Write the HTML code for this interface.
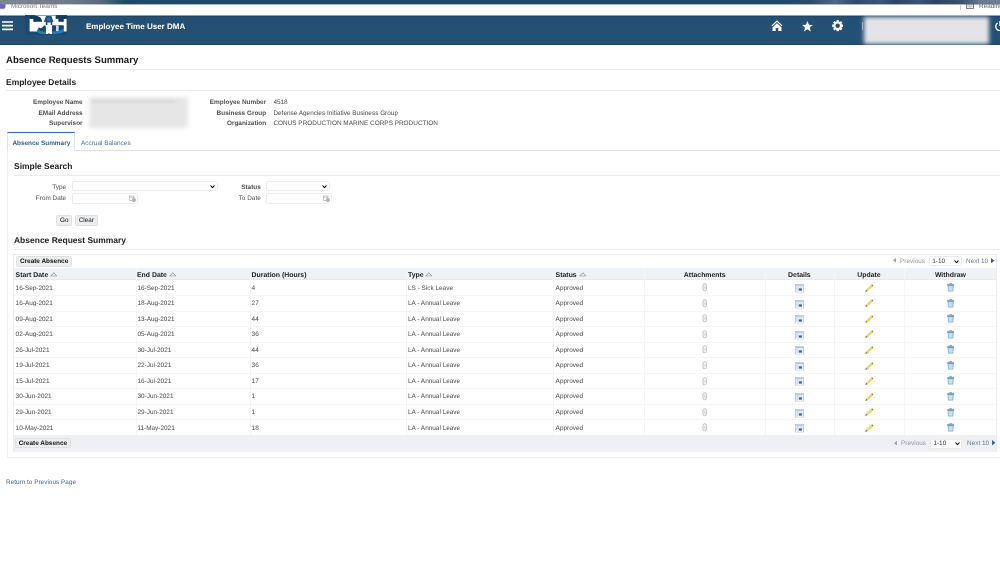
<!DOCTYPE html>
<html lang="en"><head><meta charset="utf-8"><title>Absence Requests Summary</title>
<style>
*{box-sizing:border-box;margin:0;padding:0}
html,body{width:1000px;height:562px;overflow:hidden;background:#fff}
body{position:relative;-webkit-font-smoothing:antialiased;text-rendering:geometricPrecision;font-family:"Liberation Sans",Arial,sans-serif;font-size:6.43px;color:#555}
.a{position:absolute;white-space:nowrap;line-height:1}
.b{font-weight:bold}
.r{text-align:right}
.hl{position:absolute;height:1px;background:#ebebeb}
.vl{position:absolute;width:1px;background:#e7e7e7}
#chrome-top{position:absolute;left:0;top:-4px;width:1000px;height:8px;background:linear-gradient(90deg,#7d8793 0,#6e7a89 7%,#586b7d 10%,#1d4a6a 12.5%,#1b4a6b 78%,#2a4a6e 81%,#4f6587 83.5%,#2e4a6e 85.5%,#3b5578 88%,#2b4568 89.5%,#3a5376 92%,#2a4466 93.5%,#3a4f70 96%,#66778f 98%,#6f7f95 100%)}
#hdr{position:absolute;left:-6px;top:15px;width:1012px;height:30px;background:#245073;border-top:1px solid #8fa3b6;border-bottom:1px solid #1e4465;box-shadow:inset 0 1px 0 #1e4465}
#hdr .ttl{left:86px;top:21.5px;font-size:8.03px;color:#fff;font-weight:bold}
.blur{position:absolute;background:#e6e6e6;filter:blur(2.2px)}
h1,h2{font-weight:bold;color:#222}
.lab{color:#505050;font-weight:bold;text-align:right}
.val{color:#4c4c4c}
.sel,.inp{position:absolute;background:#fff;border:1px solid #ececec;border-radius:1.5px}
.btn{position:absolute;background:#ebedef;border:1px solid #e0e0e0;border-radius:1.5px;color:#141414;text-align:center;line-height:1;white-space:nowrap}
.chev{position:absolute;width:5px;height:3.4px}
.row{position:absolute;left:14px;width:982.4px;height:15.5px;border-bottom:1px solid #f6f6f6}
.row .c{position:absolute;top:5.1px;line-height:1;white-space:nowrap;color:#4c4c4c;font-size:6.43px}
.c1{left:1.6px}.c2{left:123.4px}.c3{left:237.6px}.c4{left:394px}.c5{left:541.6px}
.ic{position:absolute;overflow:visible}
.clip{left:688px;top:2.8px;width:5.4px;height:8.6px}
.det{left:781.2px;top:3.7px;width:9px;height:8.6px}
.pen{left:851.4px;top:3.3px;width:8.8px;height:8px}
.bin{left:932.7px;top:2.7px;width:7.4px;height:8.8px}
.th{font-weight:bold;color:#222;font-size:6.92px}
.pg{color:#979797;font-size:6.43px}
.pgn{color:#6b7a90;font-size:6.43px}

#pg{position:absolute;left:0;top:0;width:1000px;height:562px;will-change:transform;filter:blur(0.35px)}

</style></head>
<body>
<div id="pg">
<svg width="0" height="0" style="position:absolute">
<defs>
<symbol id="i-clip" viewBox="0 0 5.4 8.6"><path d="M1 2.6 V6.2 A1.7 1.7 0 0 0 4.4 6.2 V2.4 A1.7 1.7 0 0 0 1 2.4 Z" fill="#fafafa" stroke="#b4b4b4" stroke-width="0.85"/><path d="M2.7 2.8 V5.9" stroke="#c9c9c9" stroke-width="0.8"/></symbol>
<symbol id="i-det" viewBox="0 0 9 8.6"><rect x="0.3" y="0.3" width="8.4" height="8" fill="#f2f6fc" stroke="#9fb3d9" stroke-width="0.6"/><rect x="0.6" y="0.6" width="7.8" height="1.7" fill="#b9caeb"/><path d="M0.6 4.3 H8.4 M0.6 6.3 H8.4 M3.2 2.3 V8 M6 2.3 V8" stroke="#c3d1ec" stroke-width="0.5"/><rect x="3.9" y="4.4" width="3" height="2.2" fill="#3f62aa"/><rect x="0.9" y="2.8" width="2" height="1.1" fill="#cfdbf2"/><rect x="0.9" y="4.8" width="2" height="1.1" fill="#cfdbf2"/></symbol>
<symbol id="i-pen" viewBox="0 0 8.8 8"><path d="M0.5 7.6 L1.2 5.9 L6.3 1.1 L7.6 2.4 L2.4 7.1 Z" fill="#f6e163" stroke="#cfae2a" stroke-width="0.45"/><path d="M6.3 1.1 L7.1 0.3 L8.5 1.6 L7.6 2.4 Z" fill="#d9663a"/><path d="M0.4 7.7 L1.1 6 L2.3 7.1 Z" fill="#6b5a2e"/></symbol>
<symbol id="i-bin" viewBox="0 0 7.4 8.8"><path d="M1 2.5 H6.4 L5.9 8.3 H1.5 Z" fill="#b3d3ea" stroke="#6b9cc6" stroke-width="0.6"/><rect x="0.3" y="1.2" width="6.8" height="1.3" rx="0.5" fill="#7ea7cb" stroke="#4f7ea8" stroke-width="0.4"/><rect x="2.6" y="0.3" width="2.2" height="0.9" fill="#5f8bb4"/><path d="M2.6 3.6 V7.4 M3.7 3.6 V7.4 M4.8 3.6 V7.4" stroke="#e4f0f9" stroke-width="0.5"/></symbol>
<symbol id="i-chev" viewBox="0 0 5 3.4"><path d="M0.5 0.5 L2.5 2.7 L4.5 0.5" fill="none" stroke="#111" stroke-width="1.1"/></symbol>
<symbol id="i-cal" viewBox="0 0 7 7"><rect x="0.4" y="1" width="4.6" height="4.6" fill="#fff" stroke="#a9a9a9" stroke-width="0.6"/><path d="M0.4 2.3 H5" stroke="#a9a9a9" stroke-width="0.6"/><circle cx="4.9" cy="5" r="1.7" fill="#b9b9b9" stroke="#8f8f8f" stroke-width="0.5"/></symbol>
<symbol id="i-sort" viewBox="0 0 8 5"><path d="M0.6 4.5 L4 0.8 L7.4 4.5 Z" fill="none" stroke="#808080" stroke-width="0.8"/></symbol>
</defs>
</svg>
<!-- browser chrome remnants -->
<svg class="a" style="left:0;top:4px;width:6.6px;height:5.5px" viewBox="0 0 6 5"><path d="M0 0 H5 V2.6 A1.8 1.8 0 0 1 3.2 4.4 H0 Z" fill="#6a63c4"/></svg>
<div class="a" id="teams" style="left:11px;top:4px;font-size:6.4px;color:#7a7a7a">Microsoft Teams</div>
<div class="vl" style="left:960px;top:5px;height:5px;background:#d0d0d0"></div>
<svg class="a" style="left:966px;top:1.8px;width:8px;height:7px" viewBox="0 0 8 7"><rect x="0.5" y="0.5" width="7" height="6" fill="#ededed" stroke="#777" stroke-width="0.9"/><path d="M4 0.5 V6.5 M1.6 2.5 H3 M1.6 4.2 H3 M5 2.5 H6.4 M5 4.2 H6.4" stroke="#8a8a8a" stroke-width="0.6"/></svg>
<div class="a" style="left:979px;top:4.3px;font-size:6.43px;color:#666">Reading list</div>
<div id="chrome-top"></div>
<div class="a" style="left:0;top:4px;width:1000px;height:1px;background:linear-gradient(90deg,#7d8793 0,#6e7a89 7%,#1d4a6a 12.5%,#1b4a6b 78%,#2a4468 90%,#223c5e 100%);opacity:.38"></div>

<!-- application header -->
<div id="hdr"></div>
<svg class="a" style="left:1.6px;top:21px;width:11.6px;height:9.6px" viewBox="0 0 11.6 9.6"><path d="M0 1 H11.6 M0 4.7 H11.6 M0 8.4 H11.6" stroke="#fff" stroke-width="1.7"/></svg>
<svg class="a" id="logo" style="left:25.4px;top:15.4px;width:42px;height:19.9px" viewBox="25.4 15.4 42 19.9">
<rect x="25.4" y="15.4" width="42" height="19.9" fill="#1b4a70"/>
<rect x="30" y="16.4" width="8" height="4" fill="#113b60"/>
<path d="M30 19.1 H33.9 V22 H36 V16 H56.2 V19.1 H59 V22 H64 V19.1 H67 V31.9 H64 V26 H52.5 V34.4 H50.2 L49.3 33.3 L48.4 34.4 H46.1 V26 H44.4 C42.6 28.6 39.6 29.4 38.2 30 L37.3 31.9 H30 Z" fill="#fff"/>
<path d="M30 16.4 H36.4 C40.2 16.4 42.3 18.8 42.5 22.2 H33.9 V19.1 H30 Z" fill="#113b60"/>
<rect x="56.2" y="16.4" width="11" height="2.7" fill="#113b60"/>
<rect x="59" y="19" width="5" height="3.1" fill="#113b60"/>
<path d="M46.4 16.4 H51.8 L53.9 22.4 H52.7 V25.4 H51.1 V23 H47.9 V25.4 H46.2 V22.4 H44.2 Z" fill="#1a5585"/>
<path d="M48 18 H50.4 L51 21 H47.4 Z" fill="#2f7fb5" opacity=".7"/>
<path d="M38.4 29.4 C40.8 31.4 43.4 32 46.1 31.8 V34.4 C42.6 35 39.4 34.4 37.4 32 Z" fill="#257fb5"/>
<path d="M38.4 29.6 C41 31.6 43.6 32 46.1 31.9 V27.6 C44 29 41 29.4 39.2 27.6 Z" fill="#16466f"/>
<path d="M52.5 31.6 C56 31.8 59.6 30.8 64 28.8 V32.4 C60.4 34.4 56 34.6 52.5 34.2 Z" fill="#257fb5"/>
<path d="M52.5 26 H64 V29 C60 31 56 31.9 52.5 31.7 Z" fill="#16466f"/>
<rect x="56.4" y="25.8" width="2.7" height="5.6" fill="#c4ddec"/>
</svg>
<div class="a ttl" style="left:86px;top:23.4px;font-size:8.03px;color:#fff;font-weight:bold">Employee Time User DMA</div>
<svg class="a" style="left:771.4px;top:20.2px;width:12px;height:11.2px" viewBox="0 0 12 11.2"><path d="M6 0.3 L11.5 5.4 L10.6 6.3 L6 2.1 L1.4 6.3 L0.5 5.4 Z" fill="#fff"/><path d="M6 3.2 L10.5 7.2 V11 H7.3 V7.9 H4.7 V11 H1.5 V7.2 Z" fill="#fff"/></svg>
<svg class="a" style="left:801.8px;top:21px;width:10.8px;height:10.6px" viewBox="0 0 10.8 10.6"><path d="M5.4 0 L6.9 3.7 L10.8 4 L7.8 6.5 L8.8 10.4 L5.4 8.3 L2 10.4 L3 6.5 L0 4 L3.9 3.7 Z" fill="#fff"/></svg>
<svg class="a" style="left:831.6px;top:20.2px;width:11.4px;height:11.4px" viewBox="-5.7 -5.7 11.4 11.4"><g fill="#fff"><circle r="4.3"/><g id="gt"><rect x="-1.2" y="-5.5" width="2.4" height="2.4"/></g><use href="#gt" transform="rotate(45)"/><use href="#gt" transform="rotate(90)"/><use href="#gt" transform="rotate(135)"/><use href="#gt" transform="rotate(180)"/><use href="#gt" transform="rotate(225)"/><use href="#gt" transform="rotate(270)"/><use href="#gt" transform="rotate(315)"/></g><circle r="2.25" fill="#245073"/></svg>
<div class="vl" style="left:862px;top:22px;height:8px;background:#c9d2dc;width:0.8px;opacity:.6"></div>
<div class="blur" style="left:864px;top:17.2px;width:125.4px;height:26.8px;filter:blur(2.2px);background:#e4e4e6"></div>
<svg class="a" style="left:995px;top:21px;width:10px;height:10.4px" viewBox="0 0 10 10.4"><path d="M2.6 2 A4.2 4.2 0 1 0 7.4 2" fill="none" stroke="#fff" stroke-width="1.4"/><path d="M5 0 V5" stroke="#fff" stroke-width="1.4"/></svg>

<!-- page title -->
<h1 class="a" style="left:6px;top:55.6px;font-size:9.61px;color:#161616">Absence Requests Summary</h1>
<div class="hl" style="left:5.6px;top:69px;width:994.4px"></div>
<h2 class="a" style="left:6px;top:78.4px;font-size:8.48px">Employee Details</h2>
<div class="hl" style="left:5.6px;top:90px;width:994.4px"></div>

<!-- employee details -->
<div class="a lab" style="left:0;width:82.6px;top:100.3px">Employee Name</div>
<div class="a lab" style="left:0;width:82.6px;top:110.8px">EMail Address</div>
<div class="a lab" style="left:0;width:82.6px;top:121px">Supervisor</div>
<div class="blur" style="left:89px;top:96.6px;width:98.6px;height:31.6px"></div>
<div class="blur" style="left:92px;top:100px;width:84px;height:3.4px;background:#d6d6d6;filter:blur(1.3px);opacity:.7"></div>
<div class="a lab" style="left:180px;width:86.2px;top:100.3px">Employee Number</div>
<div class="a lab" style="left:180px;width:86.2px;top:110.8px">Business Group</div>
<div class="a lab" style="left:180px;width:86.2px;top:121px">Organization</div>
<div class="a val" style="left:273.4px;top:100.3px">4518</div>
<div class="a val" style="left:273.4px;top:110.8px">Defense Agencies Initiative Business Group</div>
<div class="a val" style="left:273.4px;top:121px">CONUS PRODUCTION MARINE CORPS PRODUCTION</div>

<!-- tabs -->
<div class="hl" style="left:7.6px;top:150px;width:992.4px;background:#dedede"></div>
<div class="vl" style="left:7.4px;top:133px;height:324.6px;background:#f0f0f0"></div>
<div class="a" id="tab1" style="left:7.4px;top:132px;width:67.8px;height:19px;background:#fff;border:1px solid #e2e2e2;border-bottom:none;border-top:1.5px solid #2a6db5"></div>
<div class="a b" style="left:12.4px;top:140.9px;color:#2f5f95;font-size:6.43px">Absence Summary</div>
<div class="a" style="left:81px;top:140.8px;color:#4f6f90;font-size:6.43px">Accrual Balances</div>

<!-- simple search -->
<h2 class="a" style="left:14px;top:162.3px;font-size:8.48px">Simple Search</h2>
<div class="hl" style="left:13.6px;top:174.9px;width:986.4px"></div>
<div class="a lab" style="left:0;width:66.2px;top:184.5px;font-weight:normal">Type</div>
<div class="sel" style="left:72.2px;top:181px;width:145.6px;height:10px"></div>
<svg class="chev" style="left:209.6px;top:185px"><use href="#i-chev"/></svg>
<div class="a lab" style="left:200px;width:60.8px;top:184.5px">Status</div>
<div class="sel" style="left:266px;top:181px;width:63.6px;height:10px"></div>
<svg class="chev" style="left:321.6px;top:185px"><use href="#i-chev"/></svg>
<div class="a lab" style="left:0;width:66.2px;top:195.8px;font-weight:normal">From Date</div>
<div class="inp" style="left:72.2px;top:193.4px;width:65.8px;height:10.6px"></div>
<svg class="a" style="left:128.6px;top:195px;width:7px;height:7px"><use href="#i-cal"/></svg>
<div class="a lab" style="left:200px;width:60.8px;top:195.8px;font-weight:normal">To Date</div>
<div class="inp" style="left:266px;top:193.4px;width:66.4px;height:10.6px"></div>
<svg class="a" style="left:322.6px;top:195px;width:7px;height:7px"><use href="#i-cal"/></svg>
<div class="btn" style="left:56px;top:215.3px;width:16.4px;height:10.4px;padding-top:1.6px;font-size:6.43px">Go</div>
<div class="btn" style="left:74.6px;top:215.3px;width:23.6px;height:10.4px;padding-top:1.6px;font-size:6.43px">Clear</div>

<!-- absence request summary -->
<h2 class="a" style="left:14px;top:236.2px;font-size:8.48px">Absence Request Summary</h2>
<div class="hl" style="left:13.6px;top:248.7px;width:986.4px"></div>

<!-- table frame -->
<div class="a" id="tbl" style="left:13px;top:254px;width:983.8px;height:198px;border:1px solid #ededed;border-bottom:none"></div>
<div class="btn b" style="left:16.4px;top:256.3px;width:55.4px;height:10.4px;padding-top:1.9px;font-size:6.43px">Create Absence</div>
<svg class="a" style="left:893.2px;top:258.4px;width:3px;height:4.6px" viewBox="0 0 3.2 5.2"><path d="M3.2 0 L0 2.6 L3.2 5.2 Z" fill="#9a9a9a"/></svg>
<div class="a pg" style="left:900px;top:258.8px">Previous</div>
<div class="sel" style="left:929px;top:256.3px;width:32.6px;height:10px"></div>
<div class="a" style="left:932.2px;top:258.8px;color:#444;font-size:6.43px">1-10</div>
<svg class="chev" style="left:954px;top:260px"><use href="#i-chev"/></svg>
<div class="a pgn" style="left:966px;top:258.8px">Next 10</div>
<svg class="a" style="left:991.2px;top:257.9px;width:3.4px;height:5.4px" viewBox="0 0 3.4 5.6"><path d="M0 0 L3.4 2.8 L0 5.6 Z" fill="#2b5fa8"/></svg>

<!-- column headers -->
<div class="a" id="thead" style="left:14px;top:268.2px;width:982.4px;height:11.6px;background:#eef1f6;border-bottom:1px solid #e6e9f0"></div>
<div class="a th" style="left:15.6px;top:272.7px">Start Date</div>
<svg class="a" style="left:49.8px;top:272.4px;width:7.6px;height:4.6px"><use href="#i-sort"/></svg>
<div class="a th" style="left:137px;top:272.7px">End Date</div>
<svg class="a" style="left:169px;top:272.4px;width:7.6px;height:4.6px"><use href="#i-sort"/></svg>
<div class="a th" style="left:251.6px;top:272.7px">Duration (Hours)</div>
<div class="a th" style="left:408px;top:272.7px">Type</div>
<svg class="a" style="left:425.4px;top:272.4px;width:7.6px;height:4.6px"><use href="#i-sort"/></svg>
<div class="a th" style="left:555.6px;top:272.7px">Status</div>
<svg class="a" style="left:578.6px;top:272.4px;width:7.6px;height:4.6px"><use href="#i-sort"/></svg>
<div class="a th" style="left:644.4px;width:120.8px;text-align:center;top:272.7px">Attachments</div>
<div class="a th" style="left:765.2px;width:68.4px;text-align:center;top:272.7px">Details</div>
<div class="a th" style="left:833.6px;width:70.8px;text-align:center;top:272.7px">Update</div>
<div class="a th" style="left:904.4px;width:92px;text-align:center;top:272.7px">Withdraw</div>
<!-- column dividers -->
<div class="vl" style="left:135.6px;top:268.2px;height:167px;background:#f5f5f5"></div>
<div class="vl" style="left:249.8px;top:268.2px;height:167px;background:#f5f5f5"></div>
<div class="vl" style="left:405.8px;top:268.2px;height:167px;background:#f5f5f5"></div>
<div class="vl" style="left:553.4px;top:268.2px;height:167px;background:#f5f5f5"></div>
<div class="vl" style="left:644.4px;top:268.2px;height:167px;background:#f5f5f5"></div>
<div class="vl" style="left:765.2px;top:268.2px;height:167px;background:#f5f5f5"></div>
<div class="vl" style="left:833.6px;top:268.2px;height:167px;background:#f5f5f5"></div>
<div class="vl" style="left:904.4px;top:268.2px;height:167px;background:#f5f5f5"></div>
<div id="rows">
<div class="row" style="top:280.50px"><span class="c c1">16-Sep-2021</span><span class="c c2">16-Sep-2021</span><span class="c c3">4</span><span class="c c4">LS - Sick Leave</span><span class="c c5">Approved</span><svg class="ic clip"><use href="#i-clip"/></svg><svg class="ic det"><use href="#i-det"/></svg><svg class="ic pen"><use href="#i-pen"/></svg><svg class="ic bin"><use href="#i-bin"/></svg></div>
<div class="row" style="top:296.05px"><span class="c c1">16-Aug-2021</span><span class="c c2">18-Aug-2021</span><span class="c c3">27</span><span class="c c4">LA - Annual Leave</span><span class="c c5">Approved</span><svg class="ic clip"><use href="#i-clip"/></svg><svg class="ic det"><use href="#i-det"/></svg><svg class="ic pen"><use href="#i-pen"/></svg><svg class="ic bin"><use href="#i-bin"/></svg></div>
<div class="row" style="top:311.60px"><span class="c c1">09-Aug-2021</span><span class="c c2">13-Aug-2021</span><span class="c c3">44</span><span class="c c4">LA - Annual Leave</span><span class="c c5">Approved</span><svg class="ic clip"><use href="#i-clip"/></svg><svg class="ic det"><use href="#i-det"/></svg><svg class="ic pen"><use href="#i-pen"/></svg><svg class="ic bin"><use href="#i-bin"/></svg></div>
<div class="row" style="top:327.15px"><span class="c c1">02-Aug-2021</span><span class="c c2">05-Aug-2021</span><span class="c c3">36</span><span class="c c4">LA - Annual Leave</span><span class="c c5">Approved</span><svg class="ic clip"><use href="#i-clip"/></svg><svg class="ic det"><use href="#i-det"/></svg><svg class="ic pen"><use href="#i-pen"/></svg><svg class="ic bin"><use href="#i-bin"/></svg></div>
<div class="row" style="top:342.70px"><span class="c c1">26-Jul-2021</span><span class="c c2">30-Jul-2021</span><span class="c c3">44</span><span class="c c4">LA - Annual Leave</span><span class="c c5">Approved</span><svg class="ic clip"><use href="#i-clip"/></svg><svg class="ic det"><use href="#i-det"/></svg><svg class="ic pen"><use href="#i-pen"/></svg><svg class="ic bin"><use href="#i-bin"/></svg></div>
<div class="row" style="top:358.25px"><span class="c c1">19-Jul-2021</span><span class="c c2">22-Jul-2021</span><span class="c c3">36</span><span class="c c4">LA - Annual Leave</span><span class="c c5">Approved</span><svg class="ic clip"><use href="#i-clip"/></svg><svg class="ic det"><use href="#i-det"/></svg><svg class="ic pen"><use href="#i-pen"/></svg><svg class="ic bin"><use href="#i-bin"/></svg></div>
<div class="row" style="top:373.80px"><span class="c c1">15-Jul-2021</span><span class="c c2">16-Jul-2021</span><span class="c c3">17</span><span class="c c4">LA - Annual Leave</span><span class="c c5">Approved</span><svg class="ic clip"><use href="#i-clip"/></svg><svg class="ic det"><use href="#i-det"/></svg><svg class="ic pen"><use href="#i-pen"/></svg><svg class="ic bin"><use href="#i-bin"/></svg></div>
<div class="row" style="top:389.35px"><span class="c c1">30-Jun-2021</span><span class="c c2">30-Jun-2021</span><span class="c c3">1</span><span class="c c4">LA - Annual Leave</span><span class="c c5">Approved</span><svg class="ic clip"><use href="#i-clip"/></svg><svg class="ic det"><use href="#i-det"/></svg><svg class="ic pen"><use href="#i-pen"/></svg><svg class="ic bin"><use href="#i-bin"/></svg></div>
<div class="row" style="top:404.90px"><span class="c c1">29-Jun-2021</span><span class="c c2">29-Jun-2021</span><span class="c c3">1</span><span class="c c4">LA - Annual Leave</span><span class="c c5">Approved</span><svg class="ic clip"><use href="#i-clip"/></svg><svg class="ic det"><use href="#i-det"/></svg><svg class="ic pen"><use href="#i-pen"/></svg><svg class="ic bin"><use href="#i-bin"/></svg></div>
<div class="row" style="top:420.45px"><span class="c c1">10-May-2021</span><span class="c c2">11-May-2021</span><span class="c c3">18</span><span class="c c4">LA - Annual Leave</span><span class="c c5">Approved</span><svg class="ic clip"><use href="#i-clip"/></svg><svg class="ic det"><use href="#i-det"/></svg><svg class="ic pen"><use href="#i-pen"/></svg><svg class="ic bin"><use href="#i-bin"/></svg></div>
</div>
<!-- table footer -->
<div class="a" id="tfoot" style="left:14px;top:435px;width:982.4px;height:17px;background:#eef0f4"></div>
<div class="btn b" style="left:15.2px;top:438.3px;width:55.4px;height:10px;padding-top:1.7px;font-size:6.43px">Create Absence</div>
<svg class="a" style="left:894.4px;top:440.9px;width:3px;height:4.6px" viewBox="0 0 3.2 5.2"><path d="M3.2 0 L0 2.6 L3.2 5.2 Z" fill="#9a9a9a"/></svg>
<div class="a pg" style="left:901px;top:441.2px">Previous</div>
<div class="sel" style="left:930.4px;top:439px;width:31.8px;height:9.6px"></div>
<div class="a" style="left:933.4px;top:441.2px;color:#444;font-size:6.43px">1-10</div>
<svg class="chev" style="left:955.4px;top:442.2px"><use href="#i-chev"/></svg>
<div class="a pgn" style="left:967px;top:441.2px">Next 10</div>
<svg class="a" style="left:992px;top:440.4px;width:3.4px;height:5.4px" viewBox="0 0 3.4 5.6"><path d="M0 0 L3.4 2.8 L0 5.6 Z" fill="#2b5fa8"/></svg>
<div class="hl" style="left:7.4px;top:457px;width:992.6px;background:#eeeeee"></div>
<a class="a" style="left:6px;top:480.4px;color:#4a6a98;font-size:6.43px;text-decoration:none">Return to Previous Page</a>
</div>
</body></html>
